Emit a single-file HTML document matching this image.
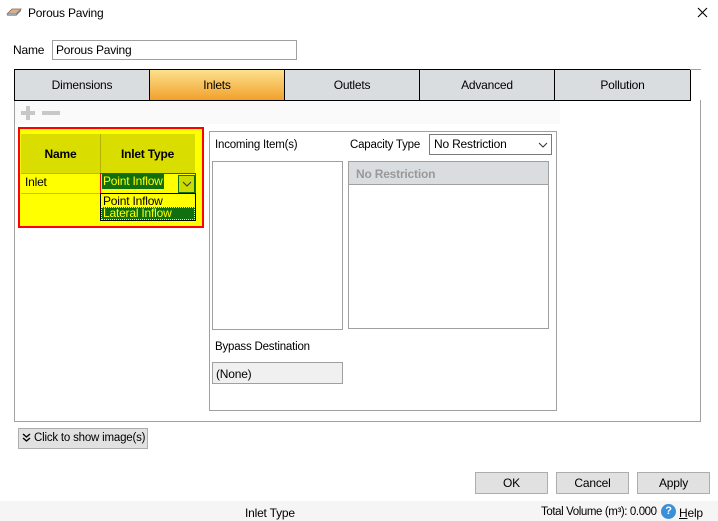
<!DOCTYPE html><html><head><style>
*{box-sizing:border-box}
body{margin:0;width:718px;height:521px;background:#fff;font-family:"Liberation Sans",sans-serif;font-size:12px;color:#000;position:relative;overflow:hidden;letter-spacing:-0.2px}
.a{position:absolute;white-space:nowrap}
.tab{position:absolute;top:69px;height:32px;border:1px solid #000;background:#dadde0;text-align:center;line-height:30px;font-size:12px}
.btn{position:absolute;border:1px solid #adadad;background:#e1e1e1;text-align:center;font-size:12px}
</style></head><body>
<svg class="a" style="left:6px;top:6px" width="16" height="12"><path d="M1 8 L6 3 L15 3 L10 8 Z" fill="#d8b08a" stroke="#8a6a50" stroke-width="0.8"/><path d="M1 8 L10 8 L10 10 L1 10Z" fill="#9ab"/><path d="M10 8 L15 3 L15 5 L10 10Z" fill="#789"/></svg>
<div class="a" style="left:28px;top:6px;font-size:12px">Porous Paving</div>
<svg class="a" style="left:697px;top:7px" width="11" height="11"><path d="M1 1L10 10M10 1L1 10" stroke="#000" stroke-width="1.1"/></svg>
<div class="a" style="left:13px;top:43px">Name</div>
<div class="a" style="left:52px;top:40px;width:245px;height:20px;border:1px solid #a0a0a0;padding:2px 3px">Porous Paving</div>
<div class="a" style="left:14px;top:100px;width:687px;height:322px;border:1px solid #a0a0a0;border-top:none"></div>
<div class="a" style="left:15px;top:101px;width:545px;height:23px;background:#fafafa"></div>
<div class="tab" style="left:14px;width:136px">Dimensions</div>
<div class="tab" style="left:149px;width:136px;background:linear-gradient(#fde08d,#f1a12c)">Inlets</div>
<div class="tab" style="left:284px;width:136px">Outlets</div>
<div class="tab" style="left:419px;width:136px">Advanced</div>
<div class="tab" style="left:554px;width:137px">Pollution</div>
<div class="a" style="left:690px;top:69px;width:11px;height:1px;background:#a0a0a0"></div>
<svg class="a" style="left:18px;top:104px" width="44" height="18"><path d="M10 2V16M3 9H17" stroke="#c8c8c8" stroke-width="4"/><path d="M24 9H42" stroke="#c8c8c8" stroke-width="4"/></svg>
<div class="a" style="left:18px;top:127px;width:186px;height:101px;border:2px solid #f00;background:#ff0"></div>
<div class="a" style="left:21px;top:134px;width:174px;height:40px;background:#d9dd00;border-bottom:1px solid #bcbc00"></div>
<div class="a" style="left:100px;top:134px;width:1px;height:60px;background:#b4b400"></div>
<div class="a" style="left:21px;top:193px;width:80px;height:1px;background:#c8c800"></div>
<div class="a" style="left:21px;top:147px;width:79px;text-align:center;font-weight:bold">Name</div>
<div class="a" style="left:100px;top:147px;width:95px;text-align:center;font-weight:bold">Inlet Type</div>
<div class="a" style="left:25px;top:175px">Inlet</div>
<div class="a" style="left:100px;top:173px;width:96px;height:21px;border:1px solid #f00"></div>
<div class="a" style="left:102px;top:174px;background:#107010;color:#ff0;padding:0 1px;height:15px;line-height:15px">Point Inflow</div>
<div class="a" style="left:178px;top:175px;width:17px;height:18px;background:#cddc00;border:1px solid #107010"></div>
<svg class="a" style="left:182px;top:181px" width="10" height="6"><path d="M1 1L5 5L9 1" stroke="#333" fill="none"/></svg>
<div class="a" style="left:100px;top:193px;width:96px;height:28px;border:1px solid #000;background:#ff0"></div>
<div class="a" style="left:103px;top:194px">Point Inflow</div>
<div class="a" style="left:101px;top:207px;width:94px;height:13px;background:#107010;color:#ff0;padding-left:2px;line-height:13px;outline:1px dotted #ff0;outline-offset:-1px">Lateral Inflow</div>
<div class="a" style="left:209px;top:131px;width:348px;height:280px;border:1px solid #a0a0a0"></div>
<div class="a" style="left:215px;top:139px;font-size:11.5px">Incoming Item(s)</div>
<div class="a" style="left:212px;top:161px;width:131px;height:169px;border:1px solid #a0a0a0"></div>
<div class="a" style="left:350px;top:139px;font-size:11.5px">Capacity Type</div>
<div class="a" style="left:429px;top:134px;width:123px;height:21px;border:1px solid #7a7a7a;padding:2px 4px">No Restriction</div>
<svg class="a" style="left:538px;top:142px" width="10" height="6"><path d="M1 1L5 5L9 1" stroke="#333" fill="none"/></svg>
<div class="a" style="left:348px;top:161px;width:201px;height:168px;border:1px solid #a0a0a0"></div>
<div class="a" style="left:349px;top:162px;width:199px;height:23px;background:#dadde0;border-bottom:1px solid #a0a0a0;color:#999;font-weight:bold;padding:5px 7px">No Restriction</div>
<div class="a" style="left:215px;top:341px;font-size:11.5px">Bypass Destination</div>
<div class="a" style="left:212px;top:362px;width:131px;height:22px;border:1px solid #a0a0a0;background:#f0f0f0;padding:4px 3px">(None)</div>
<div class="btn" style="left:18px;top:428px;width:130px;height:21px;line-height:19px;text-align:left;padding-left:15px;font-size:11.5px">Click to show image(s)</div>
<svg class="a" style="left:22px;top:433px" width="9" height="10"><path d="M1 1L4.5 4L8 1M1 5L4.5 8L8 5" stroke="#000" stroke-width="1.4" fill="none"/></svg>
<div class="btn" style="left:475px;top:472px;width:73px;height:22px;line-height:20px">OK</div>
<div class="btn" style="left:556px;top:472px;width:73px;height:22px;line-height:20px">Cancel</div>
<div class="btn" style="left:637px;top:472px;width:73px;height:22px;line-height:20px">Apply</div>
<div class="a" style="left:0;top:501px;width:718px;height:20px;background:#f5f5f5"></div>
<div class="a" style="left:245px;top:506px">Inlet Type</div>
<div class="a" style="left:541px;top:506px;font-size:11.5px;letter-spacing:-0.4px">Total Volume (m³): 0.000</div>
<div class="a" style="left:661px;top:504px;width:15px;height:15px;border-radius:50%;background:#3a8fd8;color:#fff;font-size:11px;font-weight:bold;text-align:center;line-height:15px">?</div>
<div class="a" style="left:679px;top:506px"><u>H</u>elp</div>
</body></html>
